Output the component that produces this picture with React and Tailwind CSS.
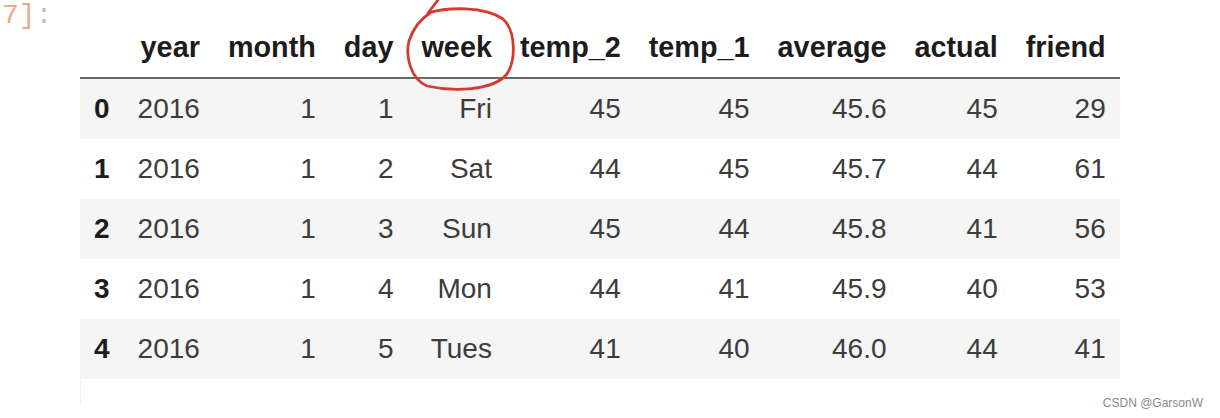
const columns = ["year", "month", "day", "week", "temp_2", "temp_1", "average", "actual", "friend"];

const rows = [
  ["2016", "1", "1", "Fri", "45", "45", "45.6", "45", "29"],
  ["2016", "1", "2", "Sat", "44", "45", "45.7", "44", "61"],
  ["2016", "1", "3", "Sun", "45", "44", "45.8", "41", "56"],
  ["2016", "1", "4", "Mon", "44", "41", "45.9", "40", "53"],
  ["2016", "1", "5", "Tues", "41", "40", "46.0", "44", "41"],
];

// hand-drawn annotation around the "week" header
function RedCircle() {
  return (
    <svg
      className="pointer-events-none absolute left-0 top-0"
      width="1220"
      height="418"
      viewBox="0 0 1220 418"
      fill="none"
    >
      <path
        d="M438 0 L428 13 C448 7 484 6 503 19 C516 31 516 60 507 74 C493 91 453 92 427 86 C411 79 405 57 409 41 C413 29 419 20 430 13"
        stroke="#d63a2d"
        strokeWidth="2.8"
        strokeLinecap="round"
        strokeLinejoin="round"
      />
    </svg>
  );
}

export default function App() {
  return (
    <div
      className="relative flex h-[418px] w-[1220px] overflow-hidden bg-white"
      style={{ fontFamily: '"Liberation Sans", Arial, sans-serif' }}
    >
      {/* prompt column */}
      <div className="w-[80px] shrink-0">
        <div
          className="ml-[2px] mt-[2px] whitespace-nowrap text-[28px] leading-[28px] text-[#eaa98c]"
          style={{ fontFamily: '"Liberation Mono", "Courier New", monospace' }}
        >
          7]<span className="text-[#bdbdbd]">:</span>
        </div>
      </div>

      {/* output */}
      <div className="mt-[17px] flex flex-col">
        <table className="border-collapse text-[28px] leading-[32px] text-[#3c3c3c]">
          <thead>
            <tr className="border-b-2 border-[#6a6a6a]">
              <th className="px-[14px] py-[14px]"></th>
              {columns.map((c) => (
                <th key={c} className="px-[14px] py-[14px] text-right text-[28.8px] font-bold text-[#1c1c1c]">
                  {c}
                </th>
              ))}
            </tr>
          </thead>
          <tbody>
            {rows.map((r, i) => (
              <tr key={i} className={i % 2 === 0 ? "bg-[#f5f5f5]" : "bg-white"}>
                <th className="px-[14px] py-[14px] text-left font-bold text-[#1c1c1c]">{i}</th>
                {r.map((v, j) => (
                  <td key={j} className="px-[14px] py-[14px] text-right">
                    {v}
                  </td>
                ))}
              </tr>
            ))}
          </tbody>
        </table>
        <div className="h-[26px] w-px bg-[#f0f0f0]"></div>
      </div>

      <RedCircle />

      <div className="absolute bottom-[8px] right-[17px] text-[12px] leading-[14px] text-[#8a8a8a]">
        CSDN @GarsonW
      </div>
    </div>
  );
}
